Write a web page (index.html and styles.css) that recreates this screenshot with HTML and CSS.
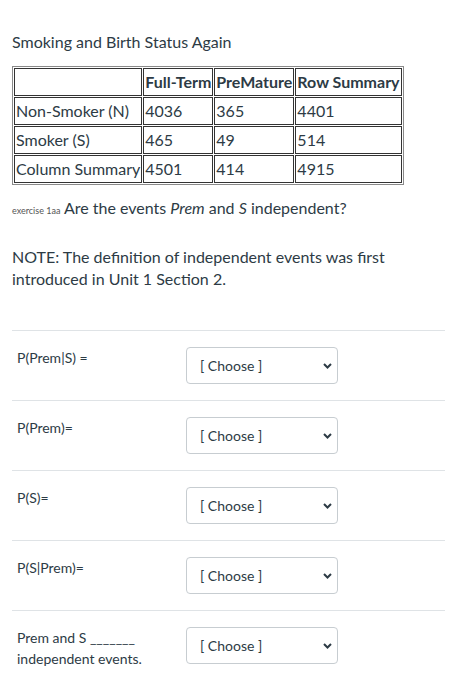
FILE: index.html
```html
<!DOCTYPE html>
<html lang="en">
<head>
	<meta charset="UTF-8" />
	<title>Smoking and Birth Status Again</title>
	<link rel="stylesheet" href="styles.css">
</head>
<body>
	<div class="question">
		<p class="title">Smoking and Birth Status Again</p>
		<table class="data">
			<tr class="head"><td></td><td>Full-Term</td><td>PreMature</td><td>Row Summary</td></tr>
			<tr><td>Non-Smoker (N)</td><td>4036</td><td>365</td><td>4401</td></tr>
			<tr><td>Smoker (S)</td><td>465</td><td>49</td><td>514</td></tr>
			<tr><td>Column Summary</td><td>4501</td><td>414</td><td>4915</td></tr>
		</table>
		<p class="ask"><span class="tag">exercise 1aa</span> Are the events <em>Prem</em> and <em>S</em> independent?</p>
		<p class="note">NOTE: The definition of independent events was first introduced in Unit 1 Section 2.</p>

		<div class="answers">
			<div class="line"><div class="label">P(Prem|S) =</div><div class="pick"><select><option>[ Choose ]</option></select><svg class="arrow" width="9" height="6" viewBox="0 0 9 6"><path d="M1 1l3.5 3.5L8 1" fill="none" stroke="#2d3b45" stroke-width="2"/></svg></div></div>
			<div class="line"><div class="label">P(Prem)=</div><div class="pick"><select><option>[ Choose ]</option></select><svg class="arrow" width="9" height="6" viewBox="0 0 9 6"><path d="M1 1l3.5 3.5L8 1" fill="none" stroke="#2d3b45" stroke-width="2"/></svg></div></div>
			<div class="line"><div class="label">P(S)=</div><div class="pick"><select><option>[ Choose ]</option></select><svg class="arrow" width="9" height="6" viewBox="0 0 9 6"><path d="M1 1l3.5 3.5L8 1" fill="none" stroke="#2d3b45" stroke-width="2"/></svg></div></div>
			<div class="line"><div class="label">P(S|Prem)=</div><div class="pick"><select><option>[ Choose ]</option></select><svg class="arrow" width="9" height="6" viewBox="0 0 9 6"><path d="M1 1l3.5 3.5L8 1" fill="none" stroke="#2d3b45" stroke-width="2"/></svg></div></div>
			<div class="line"><div class="label">Prem and S _______ independent events.</div><div class="pick"><select><option>[ Choose ]</option></select><svg class="arrow" width="9" height="6" viewBox="0 0 9 6"><path d="M1 1l3.5 3.5L8 1" fill="none" stroke="#2d3b45" stroke-width="2"/></svg></div></div>
		</div>
	</div>
</body>
</html>
```

FILE: styles.css
```css
body,div,p,table,td,select {
	margin: 0;
	padding: 0;
}
body {
	font-family: Lato, "Liberation Sans", sans-serif;
	color: #2d3b45;
	background-color: #fff;
	font-size: 16px;
}
.question {
	width: 433px;
	padding-left: 12px;
}
.title {
	padding-top: 30px;
	line-height: 24px;
}
.data {
	margin-top: 12px;
	border: 1px solid #8a8a8a;
	border-spacing: 1px;
	line-height: 24px;
}
.data td {
	border: 1px solid #333;
	padding: 1px;
	height: 24px;
}
.data .head td {
	font-weight: bold;
}
.ask {
	margin-top: 11px;
	line-height: 24px;
}
.tag {
	font-size: 9px;
	color: #555;
}
.note {
	margin-top: 23px;
	line-height: 22.4px;
}
.answers {
	margin-top: 39px;
}
.line {
	display: flex;
	border-top: 1px solid #dfe3e6;
	padding: 16px 0 16px 5px;
	font-size: 14px;
	line-height: 21px;
}
.label {
	flex: 0 0 164px;
	padding-right: 5px;
}
.pick {
	position: relative;
	width: 152px;
	height: 37px;
}
.pick select {
	appearance: none;
	-webkit-appearance: none;
	width: 152px;
	height: 37px;
	border: 1px solid #c7cdd1;
	border-radius: 4px;
	background-color: #fff;
	padding-left: 13px;
	font-family: Lato, "Liberation Sans", sans-serif;
	font-size: 14px;
	color: #2d3b45;
	outline: none;
}
.arrow {
	position: absolute;
	right: 6px;
	top: 16px;
}
```
